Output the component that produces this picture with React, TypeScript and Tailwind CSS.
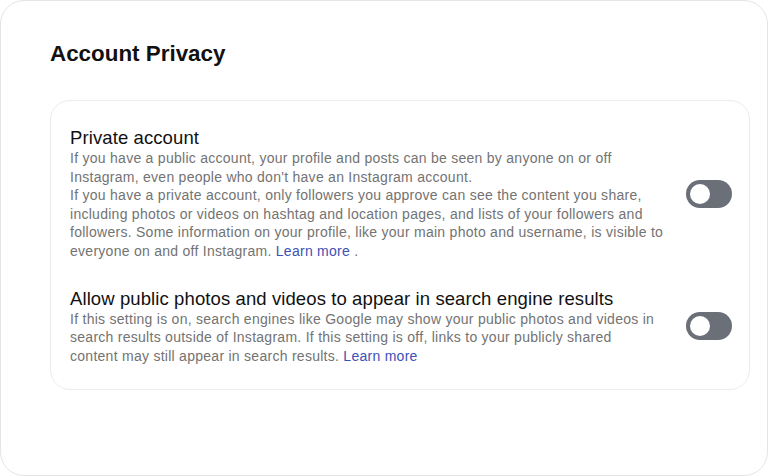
import React from "react";

const font = { fontFamily: '"Liberation Sans", Arial, sans-serif' };

function Toggle() {
  return (
    <div className="flex h-[28px] w-[46px] shrink-0 items-center rounded-full bg-[#6b6f78] p-[2px]">
      <div className="h-[24px] w-[24px] rounded-full border-2 border-[#6b6f78] bg-white" />
    </div>
  );
}

interface SettingRowProps {
  title: string;
  lines: React.ReactNode[];
}

function SettingRow({ title, lines }: SettingRowProps) {
  return (
    <div className="flex items-center">
      <div className="w-[600px]">
        <h3 className="text-[18.5px] leading-[22px] tracking-[0.1px] text-[#111111]">{title}</h3>
        <p className="text-[14px] leading-[18.6px] tracking-[0.27px] text-[#737373]">
          {lines.map((line, i) => (
            <span key={i} className="block whitespace-nowrap">
              {line}
            </span>
          ))}
        </p>
      </div>
      <div className="ml-auto">
        <Toggle />
      </div>
    </div>
  );
}

export default function App() {
  return (
    <div style={font} className="h-[476px] w-[768px] bg-white">
      <div className="h-full w-full rounded-[24px] border border-[#e5e5e5] pl-[49px] pr-[17px] pt-[38px]">
        <h1 className="text-[22.4px] font-bold leading-[30px] text-[#111111]">Account Privacy</h1>
        <div className="mt-[31px] flex flex-col gap-[27px] rounded-[20px] border border-[#ececec] pb-[24px] pl-[19px] pr-[17px] pt-[26px]">
          <SettingRow
            title="Private account"
            lines={[
              "If you have a public account, your profile and posts can be seen by anyone on or off",
              "Instagram, even people who don't have an Instagram account.",
              "If you have a private account, only followers you approve can see the content you share,",
              "including photos or videos on hashtag and location pages, and lists of your followers and",
              "followers. Some information on your profile, like your main photo and username, is visible to",
              <>
                everyone on and off Instagram. <span className="text-[#4051b5]">Learn more</span> .
              </>,
            ]}
          />
          <SettingRow
            title="Allow public photos and videos to appear in search engine results"
            lines={[
              "If this setting is on, search engines like Google may show your public photos and videos in",
              "search results outside of Instagram. If this setting is off, links to your publicly shared",
              <>
                content may still appear in search results.{" "}
                <span className="text-[#4051b5]">Learn more</span>
              </>,
            ]}
          />
        </div>
      </div>
    </div>
  );
}
